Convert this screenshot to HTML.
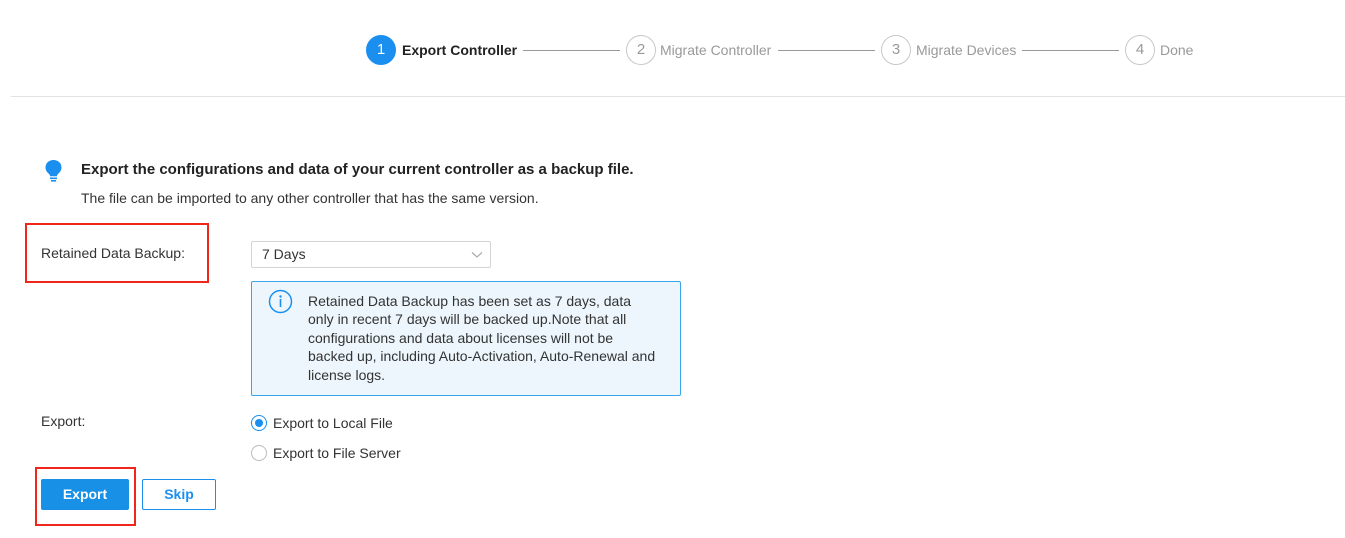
<!DOCTYPE html>
<html><head><meta charset="utf-8"><style>
*{margin:0;padding:0;box-sizing:border-box}
body{width:1345px;height:538px;background:#fff;font-family:"Liberation Sans",Arial,sans-serif;color:#333;position:relative;overflow:hidden}
.a{position:absolute;white-space:nowrap}
.c{position:absolute;width:30px;height:30px;border-radius:50%;border:1px solid #c8c8c8;color:#999;font-size:15px;text-align:center;line-height:28px}
.st{font-size:14px;color:#999;line-height:16px}
.ln{position:absolute;height:1px;background:#999;top:50px}
</style></head><body>
<div class="c" style="left:366px;top:35px;background:#1a8ff0;border-color:#1a8ff0;color:#fff">1</div>
<div class="a st" style="left:402px;top:42px;color:#222;font-weight:bold">Export Controller</div>
<div class="ln" style="left:523px;width:97px"></div>
<div class="c" style="left:626px;top:35px">2</div>
<div class="a st" style="left:660px;top:42px">Migrate Controller</div>
<div class="ln" style="left:778px;width:97px"></div>
<div class="c" style="left:881px;top:35px">3</div>
<div class="a st" style="left:916px;top:42px">Migrate Devices</div>
<div class="ln" style="left:1022px;width:97px"></div>
<div class="c" style="left:1125px;top:35px">4</div>
<div class="a st" style="left:1160px;top:42px">Done</div>
<div class="a" style="left:11px;top:96px;width:1334px;height:1px;background:#e3e3e3"></div>

<svg class="a" style="left:44px;top:159px" width="19" height="24" viewBox="0 0 19 24"><path d="M9.5 1C4.8 1 1.5 4.3 1.5 8.5c0 3 1.8 4.8 3.3 6.3.8.8 1.2 1.5 1.2 2.4h7c0-.9.4-1.6 1.2-2.4 1.5-1.5 3.3-3.3 3.3-6.3C17.5 4.3 14.2 1 9.5 1z" fill="#1a8ff0"/><rect x="6" y="18.5" width="7" height="1.6" fill="#1a8ff0"/><rect x="7" y="21" width="5" height="1.6" fill="#1a8ff0"/></svg>
<div class="a" style="left:81px;top:161px;font-size:15px;font-weight:bold;color:#222">Export the configurations and data of your current controller as a backup file.</div>
<div class="a" style="left:81px;top:190px;font-size:14px">The file can be imported to any other controller that has the same version.</div>

<div class="a" style="left:25px;top:223px;width:184px;height:60px;border:2px solid #f0261c"></div>
<div class="a" style="left:41px;top:245px;font-size:14px">Retained Data Backup:</div>
<div class="a" style="left:251px;top:241px;width:240px;height:27px;border:1px solid #d4d4d4;border-radius:2px"></div>
<div class="a" style="left:262px;top:246px;font-size:14px">7 Days</div>
<svg class="a" style="left:471px;top:251px" width="12" height="8"><path d="M1 1.5l5 4.5 5-4.5" fill="none" stroke="#aaa" stroke-width="1.2"/></svg>

<div class="a" style="left:251px;top:281px;width:430px;height:115px;border:1px solid #3aa5e8;background:#edf6fc;border-radius:2px"></div>
<svg class="a" style="left:268px;top:289px" width="25" height="25"><circle cx="12.5" cy="12.5" r="11" fill="none" stroke="#1a8ff0" stroke-width="1.5"/><circle cx="12.5" cy="7.5" r="1.2" fill="#1a8ff0"/><rect x="11.7" y="10" width="1.6" height="8" fill="#1a8ff0"/></svg>
<div class="a" style="left:308px;top:292px;font-size:14px;line-height:18.4px;white-space:nowrap">Retained Data Backup has been set as 7 days, data<br>only in recent 7 days will be backed up.Note that all<br>configurations and data about licenses will not be<br>backed up, including Auto-Activation, Auto-Renewal and<br>license logs.</div>

<div class="a" style="left:41px;top:413px;font-size:14px">Export:</div>
<div class="a" style="left:251px;top:415px;width:16px;height:16px;border-radius:50%;border:1px solid #1a8ff0"></div>
<div class="a" style="left:255px;top:419px;width:8px;height:8px;border-radius:50%;background:#1a8ff0"></div>
<div class="a" style="left:273px;top:415px;font-size:14px">Export to Local File</div>
<div class="a" style="left:251px;top:445px;width:16px;height:16px;border-radius:50%;border:1px solid #bbb"></div>
<div class="a" style="left:273px;top:445px;font-size:14px">Export to File Server</div>

<div class="a" style="left:35px;top:467px;width:101px;height:59px;border:2px solid #f0261c"></div>
<div class="a" style="left:41px;top:479px;width:88px;height:31px;background:#1890e6;border-radius:2px;color:#fff;font-weight:bold;font-size:14px;text-align:center;line-height:31px">Export</div>
<div class="a" style="left:142px;top:479px;width:74px;height:31px;border:1px solid #1a8ff0;border-radius:2px;color:#1a8ff0;font-weight:bold;font-size:14px;text-align:center;line-height:29px">Skip</div>
</body></html>
